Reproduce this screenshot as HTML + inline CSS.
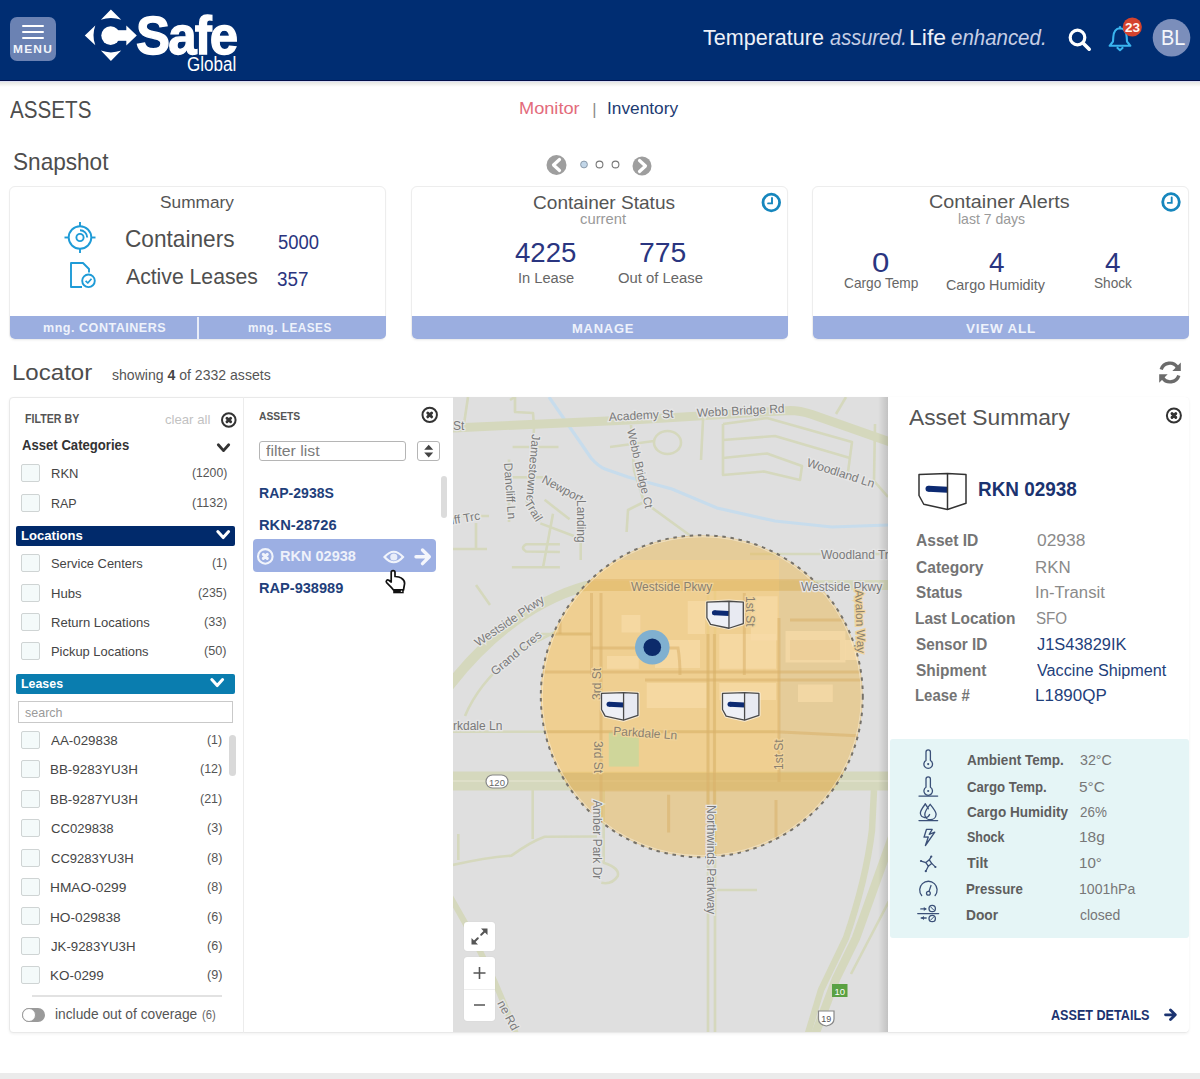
<!DOCTYPE html>
<html><head><meta charset="utf-8"><title>Assets</title>
<style>
html,body{margin:0;padding:0;}
body{width:1200px;height:1079px;overflow:hidden;position:relative;background:#ffffff;font-family:"Liberation Sans", sans-serif;}
.t{position:absolute;white-space:nowrap;line-height:1;}
.b{position:absolute;}
svg.b{overflow:visible;}
</style></head><body>
<div class="b" style="left:0px;top:0px;width:1200px;height:80px;background:#002d72;"></div>
<div class="b" style="left:0px;top:79.5px;width:1200px;height:1.2px;background:#020f4a;"></div>
<div class="b" style="left:0px;top:80.7px;width:1200px;height:1.3px;background:#dcdff4;"></div>
<div class="b" style="left:0px;top:82px;width:1200px;height:5px;background:linear-gradient(#e6e7e2,#ffffff);"></div>
<div class="b" style="left:9.5px;top:17px;width:46px;height:44px;background:#6b82b3;border-radius:7px;"></div>
<div class="b" style="left:22px;top:24.5px;width:22px;height:2.6px;background:#ffffff;border-radius:1px;"></div>
<div class="b" style="left:22px;top:30.5px;width:22px;height:2.6px;background:#ffffff;border-radius:1px;"></div>
<div class="b" style="left:22px;top:36.5px;width:22px;height:2.6px;background:#ffffff;border-radius:1px;"></div>
<div class="t" style="left:12.90px;top:44.40px;font-size:11.8px;font-weight:700;color:#f2f5fb;letter-spacing:1.2px;transform:scale(1.0105,1);transform-origin:0 9.90px;">MENU</div>
<svg class="b" style="left:80px;top:5px;" width="65" height="62" viewBox="80 5 65 62">
<path d="M111,18.5 A17.2,17.2 0 1 0 111,52.7 L111,47 A11.5,11.5 0 1 1 111,24.2 Z" fill="#001f62" opacity="0.15"/>
<g fill="#ffffff">
<path d="M110.9,9.4 L121.2,19.7 Q110.9,16.3 100.9,19.7 Z"/>
<path d="M110.9,61.1 L121.2,50.6 Q110.9,54.2 100.9,50.6 Z"/>
<path d="M84.8,35.6 L95.3,25.6 Q91.6,35.6 95.3,45.3 Z"/>
<circle cx="110.6" cy="35.6" r="9.3"/>
<rect x="110" y="30.2" width="18" height="10.6"/>
<path d="M126.3,25.6 L136.8,35.6 L126.3,45.4 Z"/>
</g></svg>
<div class="t" style="left:135.65px;top:8.30px;font-size:54px;font-weight:700;color:#ffffff;letter-spacing:-2px;transform:scale(0.9457,1);transform-origin:0 46.00px;-webkit-text-stroke:1.3px #fff;">Safe</div>
<div class="t" style="left:186.72px;top:54.60px;font-size:19.4px;color:#ffffff;transform:scale(0.8778,1);transform-origin:0 16.70px;">Global</div>
<div class="t" style="left:702.50px;top:26.80px;font-size:22px;color:#eef1f8;transform:scale(0.9797,1);transform-origin:0 18.50px;">Temperature</div>
<div class="t" style="left:829.60px;top:26.80px;font-size:22px;color:#c6cee5;font-style:italic;transform:scale(0.9110,1);transform-origin:0 18.50px;">assured.</div>
<div class="t" style="left:909.06px;top:26.80px;font-size:22px;color:#eef1f8;transform:scale(1.0441,1);transform-origin:0 18.50px;">Life</div>
<div class="t" style="left:951.30px;top:26.80px;font-size:22px;color:#c6cee5;font-style:italic;transform:scale(0.9300,1);transform-origin:0 18.50px;">enhanced.</div>
<svg class="b" style="left:1060px;top:20px;" width="40" height="40" viewBox="1060 20 40 40"><circle cx="1077.5" cy="37.5" r="7.3" fill="none" stroke="#fff" stroke-width="3.2"/><line x1="1083.2" y1="43.2" x2="1089.2" y2="49.2" stroke="#fff" stroke-width="3.6" stroke-linecap="round"/></svg>
<svg class="b" style="left:1100px;top:15px;" width="45" height="40" viewBox="1100 15 45 40"><path d="M1120,28.2 C1115,28.5 1113.6,32 1113.3,37 L1113,41.5 L1109.6,45.8 L1130.4,45.8 L1127,41.5 L1126.7,37 C1126.4,32 1125,28.5 1120,28.2 Z" fill="none" stroke="#3ab5ef" stroke-width="2.1" stroke-linejoin="round"/><path d="M1120,26.2 L1120,28.4" stroke="#3ab5ef" stroke-width="2.2"/><path d="M1116.8,47.2 L1120,50.2 L1123.2,47.2" fill="none" stroke="#3ab5ef" stroke-width="2" stroke-linejoin="round"/></svg>
<svg class="b" style="left:1120px;top:15px;" width="25" height="25" viewBox="1120 15 25 25"><circle cx="1132.3" cy="27" r="9.6" fill="#d4432d"/></svg>
<div class="t" style="left:1124.60px;top:21.30px;font-size:13px;font-weight:700;color:#fff6f2;transform:scale(1.0429,1);transform-origin:0 11.00px;">23</div>
<svg class="b" style="left:1150px;top:17px;" width="44" height="42" viewBox="1150 17 44 42"><circle cx="1171.5" cy="37.8" r="18.8" fill="#7b8ebb"/></svg>
<div class="t" style="left:1160.80px;top:26.70px;font-size:22.2px;color:#f4f6fb;transform:scale(0.8962,1);transform-origin:0 18.60px;">BL</div>
<div class="t" style="left:9.70px;top:97.80px;font-size:24px;color:#4d4d4d;transform:scale(0.8596,1);transform-origin:0 20.50px;">ASSETS</div>
<div class="t" style="left:519.08px;top:100.20px;font-size:16.2px;color:#e36b7b;transform:scale(1.1226,1);transform-origin:0 14.10px;">Monitor</div>
<div class="t" style="left:592.30px;top:101.05px;font-size:16.5px;color:#8a8a8a;">|</div>
<div class="t" style="left:607.13px;top:100.20px;font-size:16.2px;color:#1d3b72;transform:scale(1.0682,1);transform-origin:0 14.10px;">Inventory</div>
<div class="t" style="left:13.03px;top:150.70px;font-size:23.2px;color:#4d4d4d;transform:scale(0.9742,1);transform-origin:0 19.60px;">Snapshot</div>
<svg class="b" style="left:540px;top:150px;" width="120" height="30" viewBox="540 150 120 30">
<circle cx="556.5" cy="165" r="10" fill="#9e9e9e"/>
<path d="M559.5,159.5 L553.5,165 L559.5,170.5" fill="none" stroke="#fff" stroke-width="3.2" stroke-linecap="round" stroke-linejoin="round"/>
<circle cx="642" cy="166" r="9.5" fill="#9e9e9e"/>
<path d="M639.5,160.5 L645.5,166 L639.5,171.5" fill="none" stroke="#fff" stroke-width="3.2" stroke-linecap="round" stroke-linejoin="round"/>
<circle cx="584" cy="164.5" r="3.4" fill="#c2d6e8" stroke="#8a9aaa" stroke-width="1"/>
<circle cx="599.5" cy="164.5" r="3.4" fill="#fff" stroke="#777" stroke-width="1.1"/>
<circle cx="615.5" cy="164.5" r="3.4" fill="#fff" stroke="#777" stroke-width="1.1"/>
</svg>
<div class="b" style="left:9px;top:186px;width:377px;height:154px;background:#ffffff;border:1px solid #ededed;border-radius:6px;box-sizing:border-box;box-shadow:0 1px 2px rgba(0,0,0,0.04);"></div>
<div class="b" style="left:9.5px;top:316.2px;width:376px;height:23.3px;background:#9baee0;border-radius:0 0 5px 5px;"></div>
<div class="b" style="left:411px;top:186px;width:377px;height:154px;background:#ffffff;border:1px solid #ededed;border-radius:6px;box-sizing:border-box;box-shadow:0 1px 2px rgba(0,0,0,0.04);"></div>
<div class="b" style="left:411.5px;top:316.2px;width:376px;height:23.3px;background:#9baee0;border-radius:0 0 5px 5px;"></div>
<div class="b" style="left:812px;top:186px;width:377px;height:154px;background:#ffffff;border:1px solid #ededed;border-radius:6px;box-sizing:border-box;box-shadow:0 1px 2px rgba(0,0,0,0.04);"></div>
<div class="b" style="left:812.5px;top:316.2px;width:376px;height:23.3px;background:#9baee0;border-radius:0 0 5px 5px;"></div>
<div class="t" style="left:159.81px;top:193.60px;font-size:17.4px;color:#555;transform:scale(0.9932,1);transform-origin:0 14.70px;">Summary</div>
<svg class="b" style="left:60px;top:218px;" width="40" height="40" viewBox="60 218 40 40">
<g fill="none" stroke="#1e9bd7" stroke-width="1.9">
<circle cx="80" cy="237.5" r="11.3"/>
<circle cx="80" cy="237.5" r="3.6"/>
<path d="M80,230.3 A7.2,7.2 0 0 1 87.2,237.5"/>
<path d="M80,232.8 A4.7,4.7 0 0 1 84.7,237.5" stroke-width="0"/>
<line x1="80" y1="222" x2="80" y2="226.2"/><line x1="80" y1="248.8" x2="80" y2="253"/>
<line x1="64.5" y1="237.5" x2="68.7" y2="237.5"/><line x1="91.3" y1="237.5" x2="95.5" y2="237.5"/>
</g></svg>
<svg class="b" style="left:62px;top:258px;" width="38" height="34" viewBox="62 258 38 34">
<g fill="none" stroke="#1e9bd7" stroke-width="1.9" stroke-linejoin="round">
<path d="M82,287 L71,287 L71,263 L83,263 L89,269 L89,272.5"/>
<circle cx="88.5" cy="280.8" r="6.3"/>
<path d="M85.6,280.8 L87.8,283 L91.5,278.8" stroke-width="1.7"/>
</g></svg>
<div class="t" style="left:124.84px;top:227.50px;font-size:23.6px;color:#4f4f4f;transform:scale(0.9602,1);transform-origin:0 19.80px;">Containers</div>
<div class="t" style="left:277.72px;top:232.35px;font-size:20.9px;color:#2a3580;transform:scale(0.8822,1);transform-origin:0 17.95px;">5000</div>
<div class="t" style="left:125.80px;top:265.80px;font-size:22px;color:#4f4f4f;transform:scale(0.9628,1);transform-origin:0 18.50px;">Active Leases</div>
<div class="t" style="left:276.52px;top:270.15px;font-size:19.3px;color:#2a3580;transform:scale(0.9774,1);transform-origin:0 16.15px;">357</div>
<div class="t" style="left:42.73px;top:322.15px;font-size:12.3px;font-weight:700;color:#eef2fb;letter-spacing:0.5px;transform:scale(1.0210,1);transform-origin:0 10.15px;">mng. CONTAINERS</div>
<div class="t" style="left:247.54px;top:322.15px;font-size:12.3px;font-weight:700;color:#eef2fb;letter-spacing:0.5px;transform:scale(0.9570,1);transform-origin:0 10.15px;">mng. LEASES</div>
<div class="b" style="left:196.5px;top:316.5px;width:2px;height:23px;background:#e9edf8;"></div>
<div class="t" style="left:532.70px;top:194.25px;font-size:18.1px;color:#555;transform:scale(1.0541,1);transform-origin:0 15.05px;">Container Status</div>
<div class="t" style="left:580.00px;top:211.90px;font-size:14.8px;color:#999;">current</div>
<svg class="b" style="left:755px;top:188px;" width="32" height="30" viewBox="755 188 32 30"><g fill="none" stroke="#1686bd" stroke-linecap="round"><circle cx="771.3" cy="202.5" r="8.3" stroke-width="2.8"/><path d="M772.0,197.9 L772.0,203.4 L768.0999999999999,203.4" stroke-width="1.9"/></g></svg>
<div class="t" style="left:514.50px;top:238.15px;font-size:28.3px;color:#2a3580;transform:scale(0.9758,1);transform-origin:0 24.15px;">4225</div>
<div class="t" style="left:639.00px;top:238.15px;font-size:28.3px;color:#2a3580;">775</div>
<div class="t" style="left:517.79px;top:270.20px;font-size:15.2px;color:#666;transform:scale(0.9649,1);transform-origin:0 13.10px;">In Lease</div>
<div class="t" style="left:617.50px;top:270.20px;font-size:15.2px;color:#666;transform:scale(0.9770,1);transform-origin:0 13.10px;">Out of Lease</div>
<div class="t" style="left:572.35px;top:322.00px;font-size:13.6px;font-weight:700;color:#eef2fb;letter-spacing:0.8px;transform:scale(0.9524,1);transform-origin:0 11.30px;">MANAGE</div>
<div class="t" style="left:929.42px;top:192.65px;font-size:18.3px;color:#555;transform:scale(1.0814,1);transform-origin:0 15.65px;">Container Alerts</div>
<div class="t" style="left:958.05px;top:211.90px;font-size:14.8px;color:#999;transform:scale(0.9478,1);transform-origin:0 12.40px;">last 7 days</div>
<svg class="b" style="left:1155px;top:188px;" width="32" height="30" viewBox="1155 188 32 30"><g fill="none" stroke="#1686bd" stroke-linecap="round"><circle cx="1171" cy="202" r="8.3" stroke-width="2.8"/><path d="M1171.7,197.4 L1171.7,202.9 L1167.8,202.9" stroke-width="1.9"/></g></svg>
<div class="t" style="left:872.35px;top:249.80px;font-size:27px;color:#2a3580;transform:scale(1.1538,1);transform-origin:0 22.50px;">0</div>
<div class="t" style="left:988.75px;top:249.80px;font-size:27px;color:#2a3580;transform:scale(1.0333,1);transform-origin:0 22.50px;">4</div>
<div class="t" style="left:1104.85px;top:249.80px;font-size:27px;color:#2a3580;transform:scale(1.0333,1);transform-origin:0 22.50px;">4</div>
<div class="t" style="left:844.40px;top:275.90px;font-size:14.8px;color:#666;transform:scale(0.9262,1);transform-origin:0 12.40px;">Cargo Temp</div>
<div class="t" style="left:945.50px;top:277.90px;font-size:14.8px;color:#666;transform:scale(0.9706,1);transform-origin:0 12.40px;">Cargo Humidity</div>
<div class="t" style="left:1093.68px;top:275.90px;font-size:14.8px;color:#666;transform:scale(0.9225,1);transform-origin:0 12.40px;">Shock</div>
<div class="t" style="left:965.70px;top:322.00px;font-size:13.6px;font-weight:700;color:#eef2fb;letter-spacing:0.8px;transform:scale(0.9900,1);transform-origin:0 11.30px;">VIEW ALL</div>
<div class="t" style="left:11.86px;top:361.55px;font-size:22.5px;color:#4d4d4d;transform:scale(1.0685,1);transform-origin:0 18.75px;">Locator</div>
<div class="t" style="left:112.00px;top:368.05px;font-size:14.5px;color:#555;transform:scale(0.9695,1);transform-origin:0 12.25px;">showing <b style="color:#444">4</b> of 2332 assets</div>
<svg class="b" style="left:1150px;top:355px;" width="40" height="35" viewBox="1150 355 40 35"><g fill="none" stroke="#6b6b6b" stroke-width="3.4">
<path d="M1161.2,369.5 A9,9 0 0 1 1177.5,367.5"/>
<path d="M1178.8,375.5 A9,9 0 0 1 1162.5,377.5"/></g>
<path d="M1180.8,362.5 L1180.8,371 L1172.3,371 Z" fill="#6b6b6b"/>
<path d="M1159.2,382.8 L1159.2,374.3 L1167.7,374.3 Z" fill="#6b6b6b"/></svg>
<div class="b" style="left:9px;top:397px;width:1180px;height:636px;background:#ffffff;border:1px solid #e9e9e9;border-radius:4px;box-sizing:border-box;box-shadow:0 1px 3px rgba(0,0,0,0.06);"></div>
<div class="b" style="left:243px;top:397px;width:1px;height:636px;background:#ececec;"></div>
<div class="t" style="left:25.00px;top:413.30px;font-size:12px;font-weight:700;color:#555;transform:scale(0.8885,1);transform-origin:0 10.00px;">FILTER BY</div>
<div class="t" style="left:164.60px;top:413.05px;font-size:13.5px;color:#c2c2c2;transform:scale(0.9739,1);transform-origin:0 11.25px;">clear all</div>
<svg class="b" style="left:215px;top:408px;" width="28" height="25" viewBox="215 408 28 25"><circle cx="228.8" cy="420" r="6.8" fill="none" stroke="#333" stroke-width="2"/><path d="M226.964,418.164 L230.63600000000002,421.836 M230.63600000000002,418.164 L226.964,421.836" stroke="#333" stroke-width="2.9" stroke-linecap="round"/></svg>
<div class="t" style="left:21.90px;top:438.20px;font-size:14.2px;font-weight:700;color:#333;transform:scale(0.9250,1);transform-origin:0 12.10px;">Asset Categories</div>
<svg class="b" style="left:210px;top:438px;" width="25" height="20" viewBox="210 438 25 20"><path d="M218.3,444.8 L223.5,450.6 L228.7,444.8" fill="none" stroke="#333" stroke-width="2.8" stroke-linecap="round" stroke-linejoin="round"/></svg>
<div class="b" style="left:20.8px;top:464.2px;width:19px;height:18px;background:#f4fafa;border:1px solid #cfd4d4;border-radius:2px;box-sizing:border-box;"></div>
<div class="t" style="left:51.00px;top:467.30px;font-size:13px;color:#454545;">RKN</div>
<div class="t" style="left:191.75px;top:467.40px;font-size:12.8px;color:#555;transform:scale(0.9528,1);transform-origin:0 10.90px;">(1200)</div>
<div class="b" style="left:20.8px;top:494.0px;width:19px;height:18px;background:#f4fafa;border:1px solid #cfd4d4;border-radius:2px;box-sizing:border-box;"></div>
<div class="t" style="left:51.04px;top:497.30px;font-size:13px;color:#454545;transform:scale(0.9600,1);transform-origin:0 11.00px;">RAP</div>
<div class="t" style="left:191.72px;top:497.40px;font-size:12.8px;color:#555;transform:scale(0.9800,1);transform-origin:0 10.90px;">(1132)</div>
<div class="b" style="left:15.6px;top:525.8px;width:219.4px;height:20px;background:#012a6b;border-radius:2px;"></div>
<div class="t" style="left:20.92px;top:529.15px;font-size:13.3px;font-weight:700;color:#ffffff;transform:scale(0.9839,1);transform-origin:0 11.15px;">Locations</div>
<svg class="b" style="left:210px;top:525px;" width="25" height="20" viewBox="210 525 25 20"><path d="M217.8,531.5 L223.2,537.6 L228.6,531.5" fill="none" stroke="#ffffff" stroke-width="3" stroke-linecap="round" stroke-linejoin="round"/></svg>
<div class="b" style="left:20.8px;top:554.2px;width:19px;height:18px;background:#f4fafa;border:1px solid #cfd4d4;border-radius:2px;box-sizing:border-box;"></div>
<div class="t" style="left:51.01px;top:557.30px;font-size:13px;color:#454545;transform:scale(0.9923,1);transform-origin:0 11.00px;">Service Centers</div>
<div class="t" style="left:211.54px;top:557.40px;font-size:12.8px;color:#555;transform:scale(0.9643,1);transform-origin:0 10.90px;">(1)</div>
<div class="b" style="left:20.8px;top:583.5px;width:19px;height:18px;background:#f4fafa;border:1px solid #cfd4d4;border-radius:2px;box-sizing:border-box;"></div>
<div class="t" style="left:50.99px;top:587.30px;font-size:13px;color:#454545;transform:scale(1.0086,1);transform-origin:0 11.00px;">Hubs</div>
<div class="t" style="left:198.04px;top:587.40px;font-size:12.8px;color:#555;transform:scale(0.9643,1);transform-origin:0 10.90px;">(235)</div>
<div class="b" style="left:20.8px;top:612.8000000000001px;width:19px;height:18px;background:#f4fafa;border:1px solid #cfd4d4;border-radius:2px;box-sizing:border-box;"></div>
<div class="t" style="left:51.00px;top:616.30px;font-size:13px;color:#454545;transform:scale(1.0041,1);transform-origin:0 11.00px;">Return Locations</div>
<div class="t" style="left:204.21px;top:616.40px;font-size:12.8px;color:#555;transform:scale(0.9905,1);transform-origin:0 10.90px;">(33)</div>
<div class="b" style="left:20.8px;top:642.1px;width:19px;height:18px;background:#f4fafa;border:1px solid #cfd4d4;border-radius:2px;box-sizing:border-box;"></div>
<div class="t" style="left:51.01px;top:645.30px;font-size:13px;color:#454545;transform:scale(0.9928,1);transform-origin:0 11.00px;">Pickup Locations</div>
<div class="t" style="left:204.21px;top:645.40px;font-size:12.8px;color:#555;transform:scale(0.9905,1);transform-origin:0 10.90px;">(50)</div>
<div class="b" style="left:15.6px;top:674px;width:219.4px;height:19.8px;background:#0a7daf;border-radius:2px;"></div>
<div class="t" style="left:20.97px;top:677.15px;font-size:13.3px;font-weight:700;color:#ffffff;transform:scale(0.9318,1);transform-origin:0 11.15px;">Leases</div>
<svg class="b" style="left:205px;top:672px;" width="25" height="20" viewBox="205 672 25 20"><path d="M211.8,679.5 L217.2,685.6 L222.6,679.5" fill="none" stroke="#ffffff" stroke-width="3" stroke-linecap="round" stroke-linejoin="round"/></svg>
<div class="b" style="left:18.1px;top:700.8px;width:214.6px;height:22.5px;background:#ffffff;border:1px solid #c9c9c9;box-sizing:border-box;"></div>
<div class="t" style="left:25.00px;top:706.05px;font-size:13.5px;color:#9a9a9a;transform:scale(0.9250,1);transform-origin:0 11.25px;">search</div>
<div class="b" style="left:20.8px;top:731.0px;width:19px;height:18px;background:#f4fafa;border:1px solid #cfd4d4;border-radius:2px;box-sizing:border-box;"></div>
<div class="t" style="left:51.00px;top:734.30px;font-size:13px;color:#454545;transform:scale(1.0262,1);transform-origin:0 11.00px;">AA-029838</div>
<div class="t" style="left:207.04px;top:734.40px;font-size:12.8px;color:#555;transform:scale(0.9643,1);transform-origin:0 10.90px;">(1)</div>
<div class="b" style="left:20.8px;top:760.4px;width:19px;height:18px;background:#f4fafa;border:1px solid #cfd4d4;border-radius:2px;box-sizing:border-box;"></div>
<div class="t" style="left:49.97px;top:763.30px;font-size:13px;color:#454545;transform:scale(1.0298,1);transform-origin:0 11.00px;">BB-9283YU3H</div>
<div class="t" style="left:200.02px;top:763.40px;font-size:12.8px;color:#555;transform:scale(0.9762,1);transform-origin:0 10.90px;">(12)</div>
<div class="b" style="left:20.8px;top:789.8px;width:19px;height:18px;background:#f4fafa;border:1px solid #cfd4d4;border-radius:2px;box-sizing:border-box;"></div>
<div class="t" style="left:49.97px;top:793.30px;font-size:13px;color:#454545;transform:scale(1.0298,1);transform-origin:0 11.00px;">BB-9287YU3H</div>
<div class="t" style="left:200.02px;top:793.40px;font-size:12.8px;color:#555;transform:scale(0.9762,1);transform-origin:0 10.90px;">(21)</div>
<div class="b" style="left:20.8px;top:819.2px;width:19px;height:18px;background:#f4fafa;border:1px solid #cfd4d4;border-radius:2px;box-sizing:border-box;"></div>
<div class="t" style="left:51.00px;top:822.30px;font-size:13px;color:#454545;transform:scale(1.0081,1);transform-origin:0 11.00px;">CC029838</div>
<div class="t" style="left:206.71px;top:822.40px;font-size:12.8px;color:#555;transform:scale(0.9857,1);transform-origin:0 10.90px;">(3)</div>
<div class="b" style="left:20.8px;top:848.6px;width:19px;height:18px;background:#f4fafa;border:1px solid #cfd4d4;border-radius:2px;box-sizing:border-box;"></div>
<div class="t" style="left:51.00px;top:852.30px;font-size:13px;color:#454545;transform:scale(1.0037,1);transform-origin:0 11.00px;">CC9283YU3H</div>
<div class="t" style="left:206.71px;top:852.40px;font-size:12.8px;color:#555;transform:scale(0.9857,1);transform-origin:0 10.90px;">(8)</div>
<div class="b" style="left:20.8px;top:878.0px;width:19px;height:18px;background:#f4fafa;border:1px solid #cfd4d4;border-radius:2px;box-sizing:border-box;"></div>
<div class="t" style="left:49.94px;top:881.30px;font-size:13px;color:#454545;transform:scale(1.0563,1);transform-origin:0 11.00px;">HMAO-0299</div>
<div class="t" style="left:206.71px;top:881.40px;font-size:12.8px;color:#555;transform:scale(0.9857,1);transform-origin:0 10.90px;">(8)</div>
<div class="b" style="left:20.8px;top:907.4px;width:19px;height:18px;background:#f4fafa;border:1px solid #cfd4d4;border-radius:2px;box-sizing:border-box;"></div>
<div class="t" style="left:49.95px;top:911.30px;font-size:13px;color:#454545;transform:scale(1.0515,1);transform-origin:0 11.00px;">HO-029838</div>
<div class="t" style="left:206.71px;top:911.40px;font-size:12.8px;color:#555;transform:scale(0.9857,1);transform-origin:0 10.90px;">(6)</div>
<div class="b" style="left:20.8px;top:936.8px;width:19px;height:18px;background:#f4fafa;border:1px solid #cfd4d4;border-radius:2px;box-sizing:border-box;"></div>
<div class="t" style="left:51.00px;top:940.30px;font-size:13px;color:#454545;transform:scale(1.0171,1);transform-origin:0 11.00px;">JK-9283YU3H</div>
<div class="t" style="left:206.71px;top:940.40px;font-size:12.8px;color:#555;transform:scale(0.9857,1);transform-origin:0 10.90px;">(6)</div>
<div class="b" style="left:20.8px;top:966.2px;width:19px;height:18px;background:#f4fafa;border:1px solid #cfd4d4;border-radius:2px;box-sizing:border-box;"></div>
<div class="t" style="left:49.97px;top:969.30px;font-size:13px;color:#454545;transform:scale(1.0343,1);transform-origin:0 11.00px;">KO-0299</div>
<div class="t" style="left:206.71px;top:969.40px;font-size:12.8px;color:#555;transform:scale(0.9857,1);transform-origin:0 10.90px;">(9)</div>
<div class="b" style="left:229.2px;top:734.8px;width:7.3px;height:41.7px;background:#d9d9d9;border-radius:4px;"></div>
<div class="b" style="left:32.3px;top:994.5px;width:189.6px;height:2px;background:#e2e2e2;"></div>
<div class="b" style="left:21.9px;top:1007.5px;width:23.5px;height:14.5px;background:#9a9a9a;border-radius:8px;"></div>
<div class="b" style="left:21.9px;top:1007.5px;width:14.5px;height:14.5px;background:#ffffff;border-radius:50%;border:1.3px solid #9a9a9a;box-sizing:border-box;"></div>
<div class="t" style="left:55.03px;top:1007.20px;font-size:14.2px;color:#555;transform:scale(0.9697,1);transform-origin:0 12.10px;">include out of coverage</div>
<div class="t" style="left:202.10px;top:1009.05px;font-size:12.5px;color:#666;transform:scale(0.9000,1);transform-origin:0 10.25px;">(6)</div>
<div class="t" style="left:258.90px;top:409.50px;font-size:11.6px;font-weight:700;color:#555;transform:scale(0.8891,1);transform-origin:0 9.80px;">ASSETS</div>
<svg class="b" style="left:415px;top:403px;" width="28" height="25" viewBox="415 403 28 25"><circle cx="429.7" cy="414.9" r="7.2" fill="none" stroke="#333" stroke-width="2"/><path d="M427.756,412.95599999999996 L431.644,416.844 M431.644,412.95599999999996 L427.756,416.844" stroke="#333" stroke-width="2.9" stroke-linecap="round"/></svg>
<div class="b" style="left:258.9px;top:441.2px;width:147.5px;height:20px;background:#ffffff;border:1px solid #b5b5b5;border-radius:3px;box-sizing:border-box;"></div>
<div class="t" style="left:265.90px;top:444.05px;font-size:14.5px;color:#7b7b7b;transform:scale(1.0898,1);transform-origin:0 12.25px;">filter list</div>
<div class="b" style="left:417px;top:441.2px;width:23.3px;height:20px;background:#ffffff;border:1px solid #b5b5b5;border-radius:3px;box-sizing:border-box;"></div>
<svg class="b" style="left:417px;top:441px;" width="24" height="21" viewBox="417 441 24 21"><path d="M424.2,449.8 L428.7,444.8 L433.2,449.8 Z M424.2,452.6 L428.7,457.6 L433.2,452.6 Z" fill="#444"/></svg>
<div class="b" style="left:441.3px;top:476.3px;width:6px;height:41.3px;background:#dcdcdc;border-radius:3px;"></div>
<div class="t" style="left:259.48px;top:486.90px;font-size:13.8px;font-weight:700;color:#1f3f7b;transform:scale(1.0164,1);transform-origin:0 11.40px;">RAP-2938S</div>
<div class="t" style="left:259.43px;top:518.90px;font-size:13.8px;font-weight:700;color:#1f3f7b;transform:scale(1.0653,1);transform-origin:0 11.40px;">RKN-28726</div>
<div class="b" style="left:253px;top:538.5px;width:183px;height:33.5px;background:#9cafe3;border-radius:4px;"></div>
<svg class="b" style="left:255px;top:546px;" width="22" height="22" viewBox="255 546 22 22"><circle cx="265.3" cy="556.4" r="7.3" fill="none" stroke="#f1f4fb" stroke-width="2.1"/><path d="M263.329,554.429 L267.271,558.371 M267.271,554.429 L263.329,558.371" stroke="#f1f4fb" stroke-width="3.045" stroke-linecap="round"/></svg>
<div class="t" style="left:279.85px;top:549.90px;font-size:13.8px;font-weight:700;color:#eef1fa;transform:scale(1.0521,1);transform-origin:0 11.40px;">RKN 02938</div>
<svg class="b" style="left:380px;top:545px;" width="28" height="22" viewBox="380 545 28 22"><path d="M384.5,557 Q393.8,546.5 403,557 Q393.8,567.5 384.5,557 Z" fill="none" stroke="#f1f4fb" stroke-width="2.2"/>
<circle cx="393.8" cy="557" r="3.6" fill="#e9edf9"/></svg>
<svg class="b" style="left:410px;top:545px;" width="24" height="22" viewBox="410 545 24 22"><path d="M416,556.8 L428.5,556.8 M422.5,550 L429.3,556.8 L422.5,563.6" fill="none" stroke="#f4f6fc" stroke-width="3.4" stroke-linecap="round" stroke-linejoin="round"/></svg>
<div class="t" style="left:259.44px;top:581.90px;font-size:13.8px;font-weight:700;color:#1f3f7b;transform:scale(1.0570,1);transform-origin:0 11.40px;">RAP-938989</div>
<svg class="b" style="left:383px;top:568px;" width="25" height="28" viewBox="383 568 25 28"><path d="M391.2,572.5 C391.2,570 395,570 395,572.5 L395,576.5 C397,576.5 400,577 401.5,578.2 C403.5,579.5 404.8,581 404.6,583.5 L403.5,590 L393.5,590 C391.5,587 388.5,584.5 386.6,582.6 C385.5,581 387,579.3 388.8,580.2 L391.2,582 Z" fill="#fff" stroke="#111" stroke-width="1.7" stroke-linejoin="round"/>
<rect x="393.2" y="589" width="10.5" height="4.3" fill="#111"/><circle cx="401.5" cy="591.2" r="0.8" fill="#fff"/></svg>
<svg class="b" style="left:453px;top:397px;font-family:'Liberation Sans',sans-serif;overflow:hidden;" width="435" height="635" viewBox="453 397 435 635"><rect x="453" y="397" width="435" height="635" fill="#dfdfdf"/><path d="M549,397 L591,458 Q598,466 605,469 L628,477 L672,489 L717,508 L775,521 L832,527 L888,525" fill="none" stroke="#c7dcec" stroke-width="3.2"/><path d="M468,397 L464,424" fill="none" stroke="#d5d8bd" stroke-width="2.6" stroke-linejoin="round"/><path d="M515,397 L515,412 L533,413 L534,426" fill="none" stroke="#d5d8bd" stroke-width="2.6" stroke-linejoin="round"/><path d="M534,428 L533,447" fill="none" stroke="#d5d8bd" stroke-width="2.6" stroke-linejoin="round"/><path d="M526,500 L540,521" fill="none" stroke="#d5d8bd" stroke-width="2.6" stroke-linejoin="round"/><path d="M512.6,447 L558.5,447" fill="none" stroke="#d5d8bd" stroke-width="2.6" stroke-linejoin="round"/><path d="M509,459.5 L509,522" fill="none" stroke="#d5d8bd" stroke-width="2.6" stroke-linejoin="round"/><path d="M512.6,477.3 L543.2,477.3" fill="none" stroke="#d5d8bd" stroke-width="2.6" stroke-linejoin="round"/><path d="M580.7,540 L580.7,560" fill="none" stroke="#d5d8bd" stroke-width="2.6" stroke-linejoin="round"/><path d="M453,516 L489,516" fill="none" stroke="#d5d8bd" stroke-width="2.6" stroke-linejoin="round"/><path d="M476,523 L476,549 M453,549 L487,549" fill="none" stroke="#d5d8bd" stroke-width="2.6" stroke-linejoin="round"/><path d="M553,513.7 L543.2,566.6" fill="none" stroke="#d5d8bd" stroke-width="2.6" stroke-linejoin="round"/><path d="M559.9,544.3 L526,544.3 Q520,547.8 526,551.5 L559.9,552" fill="none" stroke="#d5d8bd" stroke-width="2.6" stroke-linejoin="round"/><path d="M511.9,567.3 L559.9,567.3" fill="none" stroke="#d5d8bd" stroke-width="2.6" stroke-linejoin="round"/><path d="M631,425 L634,470 L644,502 L689.4,535" fill="none" stroke="#d5d8bd" stroke-width="2.6" stroke-linejoin="round"/><path d="M644,502 L628,510 L626.6,532" fill="none" stroke="#d5d8bd" stroke-width="2.6" stroke-linejoin="round"/><path d="M610,447 L654,441" fill="none" stroke="#d5d8bd" stroke-width="2.6" stroke-linejoin="round"/><path d="M654,442.5 A13.5,11.5 0 1 0 681,442.5 A13.5,11.5 0 1 0 654,442.5" fill="none" stroke="#d5d8bd" stroke-width="2.6" stroke-linejoin="round"/><path d="M703,420 L701,460" fill="none" stroke="#d5d8bd" stroke-width="2.6" stroke-linejoin="round"/><path d="M723,424 L767,418 L852,442 L848,472" fill="none" stroke="#d5d8bd" stroke-width="2.6" stroke-linejoin="round"/><path d="M723,440 L775,436 L850,458" fill="none" stroke="#d5d8bd" stroke-width="2.6" stroke-linejoin="round"/><path d="M723,424 L723,475 L764,471.5 L800,480 L802,466 L767,453.5 L723,458" fill="none" stroke="#d5d8bd" stroke-width="2.6" stroke-linejoin="round"/><path d="M846,397 L836,414" fill="none" stroke="#d5d8bd" stroke-width="2.6" stroke-linejoin="round"/><path d="M875,424 L874,481 L888,497" fill="none" stroke="#d5d8bd" stroke-width="2.6" stroke-linejoin="round"/><path d="M750,554 L888,554" fill="none" stroke="#d5d8bd" stroke-width="2.6" stroke-linejoin="round"/><path d="M453,731.8 L775,731.8" fill="none" stroke="#d5d8bd" stroke-width="2.6" stroke-linejoin="round"/><path d="M541,634 L592,634" fill="none" stroke="#d5d8bd" stroke-width="2.6" stroke-linejoin="round"/><path d="M465,716 Q480,680 520,650 L557,631" fill="none" stroke="#d5d8bd" stroke-width="2.6" stroke-linejoin="round"/><path d="M476,585 L490,605" fill="none" stroke="#d5d8bd" stroke-width="2.6" stroke-linejoin="round"/><path d="M510,400 L515,397" fill="none" stroke="#d5d8bd" stroke-width="2.6" stroke-linejoin="round"/><path d="M544.6,499.8 L569.6,519.3" fill="none" stroke="#d5d8bd" stroke-width="2.6" stroke-linejoin="round"/><path d="M540.4,523.4 L573.8,536" fill="none" stroke="#d5d8bd" stroke-width="2.6" stroke-linejoin="round"/><path d="M532.7,784.7 L532.7,839" fill="none" stroke="#d5d8bd" stroke-width="2.6" stroke-linejoin="round"/><path d="M440,868 Q480,858 511.5,855.6 Q530,842 544.6,836.7 L597,836.5" fill="none" stroke="#d5d8bd" stroke-width="2.6" stroke-linejoin="round"/><path d="M458.3,834 L458.3,860" fill="none" stroke="#d5d8bd" stroke-width="2.6" stroke-linejoin="round"/><path d="M603.7,790 L603.7,862.7 Q620,868 617.8,876 Q612,885 601.3,882.8" fill="none" stroke="#d5d8bd" stroke-width="2.6" stroke-linejoin="round"/><path d="M708,585 L708,1032" fill="none" stroke="#d5d8bd" stroke-width="2.6" stroke-linejoin="round"/><path d="M715,585 L715,1032" fill="none" stroke="#d5d8bd" stroke-width="2.6" stroke-linejoin="round"/><path d="M717,890 L757,890" fill="none" stroke="#d5d8bd" stroke-width="2.6" stroke-linejoin="round"/><path d="M900,880 L851,974" fill="none" stroke="#d5d8bd" stroke-width="2.6" stroke-linejoin="round"/><path d="M440,428.6 L640,419.5 L790,410.5 Q800,410.5 812,414.5 L900,445.5" fill="none" stroke="#d5d8bd" stroke-width="8.8"/><path d="M430,712 Q500,610 586,586 L900,585" fill="none" stroke="#d5d8bd" stroke-width="10"/><path d="M453,781 L888,781" fill="none" stroke="#d5d8bd" stroke-width="19"/><path d="M453,781 L888,781" fill="none" stroke="#e0e2cc" stroke-width="1.5"/><path d="M874,790 L872,830 Q866,880 846,938 L821,990 L806,1040" fill="none" stroke="#d5d8bd" stroke-width="6.5"/><path d="M900,815 L856,938 L836,979 L813,1040" fill="none" stroke="#d5d8bd" stroke-width="8.5"/><path d="M440,880 Q490,960 520,1045" fill="none" stroke="#d5d8bd" stroke-width="6"/><defs><clipPath id="cc"><circle cx="701.8" cy="696.2" r="161"/></clipPath></defs><circle cx="701.8" cy="696.2" r="161" fill="#eabb5e" fill-opacity="0.55"/><g clip-path="url(#cc)"><rect x="530" y="560" width="249" height="213" fill="#fdd386" fill-opacity="0.42"/><rect x="621.5" y="615" width="18.899999999999977" height="17.5" fill="#f8dca8" fill-opacity="0.7"/><rect x="687.7" y="601" width="17.299999999999955" height="33" fill="#f8dca8" fill-opacity="0.7"/><rect x="750.8" y="596.2" width="26.800000000000068" height="44.19999999999993" fill="#f8dca8" fill-opacity="0.7"/><rect x="785.5" y="631" width="60.0" height="31.5" fill="#f8dca8" fill-opacity="0.7"/><rect x="719.3" y="634" width="56.700000000000045" height="34.799999999999955" fill="#f8dca8" fill-opacity="0.7"/><rect x="646.7" y="683" width="59.89999999999998" height="25" fill="#f8dca8" fill-opacity="0.7"/><rect x="719.3" y="683" width="56.700000000000045" height="17" fill="#f8dca8" fill-opacity="0.7"/><rect x="798" y="684.5" width="34.799999999999955" height="17.5" fill="#f8dca8" fill-opacity="0.7"/><rect x="607" y="656" width="31.799999999999955" height="12.799999999999955" fill="#f8dca8" fill-opacity="0.7"/><rect x="655" y="640" width="45" height="28" fill="#f8dca8" fill-opacity="0.7"/><rect x="845" y="640" width="17" height="20" fill="#f8dca8" fill-opacity="0.7"/><rect x="790" y="640" width="50" height="20" fill="#e8c88e" fill-opacity="0.5"/><rect x="608.8" y="731.8" width="30" height="34.8" fill="#cfd69a"/><path d="M453,585 L888,585" stroke="#d6a550" stroke-opacity="0.3" stroke-width="12" fill="none"/><path d="M453,782 L888,782" stroke="#d6a550" stroke-opacity="0.3" stroke-width="19" fill="none"/><path d="M591.5,593 L591.5,675" fill="none" stroke="#d9b06a" stroke-width="3" stroke-opacity="0.55"/><path d="M601,593 L601,1032" fill="none" stroke="#d9b06a" stroke-width="3" stroke-opacity="0.55"/><path d="M708,634 L708,1032" fill="none" stroke="#d9b06a" stroke-width="3" stroke-opacity="0.55"/><path d="M714.4,634 L714.4,1032" fill="none" stroke="#d9b06a" stroke-width="3" stroke-opacity="0.55"/><path d="M744.3,593 L744.3,675" fill="none" stroke="#d9b06a" stroke-width="3" stroke-opacity="0.55"/><path d="M779,618 L779,782" fill="none" stroke="#d9b06a" stroke-width="3" stroke-opacity="0.55"/><path d="M591.5,648 L678,648 Q680,660 680,675" fill="none" stroke="#d9b06a" stroke-width="3" stroke-opacity="0.55"/><path d="M541,672 L862,672" fill="none" stroke="#d9b06a" stroke-width="3" stroke-opacity="0.55"/><path d="M645,680 L862,680" fill="none" stroke="#d9b06a" stroke-width="3" stroke-opacity="0.55"/><path d="M453,731.7 L776,731.7 L862,736" fill="none" stroke="#d9b06a" stroke-width="3" stroke-opacity="0.55"/><path d="M541,634 L591.5,634" fill="none" stroke="#d9b06a" stroke-width="3" stroke-opacity="0.55"/><path d="M668.6,794.7 L668.6,832.5" fill="none" stroke="#d9b06a" stroke-width="3" stroke-opacity="0.55"/><path d="M776,800 L776,840" fill="none" stroke="#d9b06a" stroke-width="3" stroke-opacity="0.55"/><path d="M560,595 L560,634" fill="none" stroke="#d9b06a" stroke-width="3" stroke-opacity="0.55"/><path d="M790,620 L862,620" fill="none" stroke="#d9b06a" stroke-width="3" stroke-opacity="0.55"/></g><circle cx="701.8" cy="696.2" r="159.6" fill="none" stroke="#ffffff" stroke-opacity="0.35" stroke-width="1.2"/><circle cx="701.8" cy="696.2" r="161" fill="none" stroke="#76726a" stroke-width="2" stroke-dasharray="3.5 4.7"/><text x="453" y="430" font-size="12" fill="#7a7a7a" text-anchor="start" stroke="#e6e6e6" stroke-width="2.5" paint-order="stroke">St</text><text x="609" y="421" font-size="12" fill="#7a7a7a" text-anchor="start" stroke="#e6e6e6" stroke-width="2.5" paint-order="stroke" transform="rotate(-3 609 421)">Academy St</text><text x="697" y="417" font-size="12" fill="#7a7a7a" text-anchor="start" stroke="#e6e6e6" stroke-width="2.5" paint-order="stroke" transform="rotate(-3 697 417)">Webb Bridge Rd</text><text x="806" y="466" font-size="12" fill="#7a7a7a" text-anchor="start" stroke="#e6e6e6" stroke-width="2.5" paint-order="stroke" transform="rotate(18 806 466)">Woodland Ln</text><text x="532" y="434" font-size="12" fill="#7a7a7a" text-anchor="start" stroke="#e6e6e6" stroke-width="2.5" paint-order="stroke" transform="rotate(95 532 434)">Jamestowne</text><text x="524" y="503" font-size="12" fill="#7a7a7a" text-anchor="start" stroke="#e6e6e6" stroke-width="2.5" paint-order="stroke" transform="rotate(58 524 503)">Trail</text><text x="504" y="463" font-size="12" fill="#7a7a7a" text-anchor="start" stroke="#e6e6e6" stroke-width="2.5" paint-order="stroke" transform="rotate(86 504 463)">Dancliff Ln</text><text x="541" y="482" font-size="12" fill="#7a7a7a" text-anchor="start" stroke="#e6e6e6" stroke-width="2.5" paint-order="stroke" transform="rotate(28 541 482)">Newport</text><text x="577" y="500" font-size="12" fill="#7a7a7a" text-anchor="start" stroke="#e6e6e6" stroke-width="2.5" paint-order="stroke" transform="rotate(90 577 500)">Landing</text><text x="627" y="430" font-size="11.5" fill="#7a7a7a" text-anchor="start" stroke="#e6e6e6" stroke-width="2.5" paint-order="stroke" transform="rotate(77 627 430)">Webb Bridge Ct</text><text x="452" y="524.5" font-size="12" fill="#7a7a7a" text-anchor="start" stroke="#e6e6e6" stroke-width="2.5" paint-order="stroke" transform="rotate(-10 452 524.5)">iff Trc</text><text x="821" y="559" font-size="12" fill="#7a7a7a" text-anchor="start" stroke="#e6e6e6" stroke-width="2.5" paint-order="stroke">Woodland Tr</text><text x="631" y="591" font-size="12" fill="#8a806f" text-anchor="start" stroke="#f0d49c" stroke-width="2.5" paint-order="stroke">Westside Pkwy</text><text x="801" y="591" font-size="12" fill="#7a7a7a" text-anchor="start" stroke="#e6e6e6" stroke-width="2.5" paint-order="stroke">Westside Pkwy</text><text x="855" y="590" font-size="12" fill="#8a806f" text-anchor="start" stroke="#f0d49c" stroke-width="2.5" paint-order="stroke" transform="rotate(88 855 590)">Avalon Way</text><text x="478" y="647" font-size="12" fill="#7a7a7a" text-anchor="start" stroke="#e6e6e6" stroke-width="2.5" paint-order="stroke" transform="rotate(-34 478 647)">Westside Pkwy</text><text x="495" y="676" font-size="12" fill="#7a7a7a" text-anchor="start" stroke="#e6e6e6" stroke-width="2.5" paint-order="stroke" transform="rotate(-40 495 676)">Grand Cres</text><text x="453" y="730" font-size="12" fill="#7a7a7a" text-anchor="start" stroke="#e6e6e6" stroke-width="2.5" paint-order="stroke">rkdale Ln</text><text x="613" y="735" font-size="12" fill="#8a806f" text-anchor="start" stroke="#f0d49c" stroke-width="2.5" paint-order="stroke" transform="rotate(4 613 735)">Parkdale Ln</text><text x="594" y="741" font-size="12" fill="#8a806f" text-anchor="start" stroke="#f0d49c" stroke-width="2.5" paint-order="stroke" transform="rotate(90 594 741)">3rd St</text><text x="601" y="700" font-size="12" fill="#8a806f" text-anchor="start" stroke="#f0d49c" stroke-width="2.5" paint-order="stroke" transform="rotate(-90 601 700)">3rd St</text><text x="783" y="770" font-size="12" fill="#8a806f" text-anchor="start" stroke="#f0d49c" stroke-width="2.5" paint-order="stroke" transform="rotate(-90 783 770)">1st St</text><text x="746" y="596" font-size="12" fill="#8a806f" text-anchor="start" stroke="#f0d49c" stroke-width="2.5" paint-order="stroke" transform="rotate(90 746 596)">1st St</text><text x="593" y="800" font-size="12" fill="#7a7a7a" text-anchor="start" stroke="#e6e6e6" stroke-width="2.5" paint-order="stroke" transform="rotate(90 593 800)">Amber Park Dr</text><text x="707" y="805" font-size="12" fill="#7a7a7a" text-anchor="start" stroke="#e6e6e6" stroke-width="2.5" paint-order="stroke" transform="rotate(90 707 805)">Northwinds Parkway</text><text x="497" y="1003" font-size="12" fill="#7a7a7a" text-anchor="start" stroke="#e6e6e6" stroke-width="2.5" paint-order="stroke" transform="rotate(62 497 1003)">ne Rd</text><rect x="486" y="775" width="22" height="13" rx="6.5" fill="#fff" stroke="#888" stroke-width="1.2"/><text x="497" y="785.5" font-size="9.5" fill="#666" text-anchor="middle">120</text><rect x="832" y="984" width="15.5" height="13" fill="#5aa142"/><text x="839.8" y="994.5" font-size="9.5" fill="#fff" text-anchor="middle">10</text><path d="M818.5,1011 L834,1011 L834,1019 Q834,1024.5 826.3,1026 Q818.5,1024.5 818.5,1019 Z" fill="#fff" stroke="#888" stroke-width="1.2"/><text x="826.3" y="1021.5" font-size="9" fill="#555" text-anchor="middle">19</text><circle cx="652.3" cy="647.3" r="17.3" fill="#80b0d0"/><circle cx="652.3" cy="647.3" r="8.8" fill="#0c2b6b"/><path d="M706.90,602.07 L728.97,601.25 L743.30,602.07 L743.30,623.58 L728.97,628.25 L710.58,624.32 L706.90,617.78 Z" fill="none" stroke="#ffffff" stroke-opacity="0.6" stroke-width="3.3" stroke-linejoin="round"/><path d="M706.90,602.07 L728.97,601.25 L743.30,602.07 L743.30,623.58 L728.97,628.25 L710.58,624.32 L706.90,617.78 Z" fill="#eef0f6"/><path d="M728.97,601.25 L743.30,602.07 L743.30,623.58 L728.97,628.25 Z" fill="#e8eaf2"/><path d="M714.43,612.69 L728.97,613.52" stroke="#0c2a72" stroke-width="5"/><circle cx="714.43" cy="612.69" r="2.5" fill="#0c2a72"/><path d="M706.90,602.07 L728.97,601.25 L743.30,602.07 L743.30,623.58 L728.97,628.25 L710.58,624.32 L706.90,617.78 Z" fill="none" stroke="#4a4a4a" stroke-width="1.3" stroke-linejoin="round"/><line x1="728.97" y1="601.25" x2="728.97" y2="628.25" stroke="#4a4a4a" stroke-width="1.3"/><path d="M601.50,693.44 L623.57,692.60 L637.90,693.44 L637.90,715.34 L623.57,720.10 L605.18,716.10 L601.50,709.44 Z" fill="none" stroke="#ffffff" stroke-opacity="0.6" stroke-width="3.3" stroke-linejoin="round"/><path d="M601.50,693.44 L623.57,692.60 L637.90,693.44 L637.90,715.34 L623.57,720.10 L605.18,716.10 L601.50,709.44 Z" fill="#eef0f6"/><path d="M623.57,692.60 L637.90,693.44 L637.90,715.34 L623.57,720.10 Z" fill="#e8eaf2"/><path d="M609.03,704.26 L623.57,705.09" stroke="#0c2a72" stroke-width="5"/><circle cx="609.03" cy="704.26" r="2.5" fill="#0c2a72"/><path d="M601.50,693.44 L623.57,692.60 L637.90,693.44 L637.90,715.34 L623.57,720.10 L605.18,716.10 L601.50,709.44 Z" fill="none" stroke="#4a4a4a" stroke-width="1.3" stroke-linejoin="round"/><line x1="623.57" y1="692.60" x2="623.57" y2="720.10" stroke="#4a4a4a" stroke-width="1.3"/><path d="M722.50,693.44 L744.57,692.60 L758.90,693.44 L758.90,715.34 L744.57,720.10 L726.18,716.10 L722.50,709.44 Z" fill="none" stroke="#ffffff" stroke-opacity="0.6" stroke-width="3.3" stroke-linejoin="round"/><path d="M722.50,693.44 L744.57,692.60 L758.90,693.44 L758.90,715.34 L744.57,720.10 L726.18,716.10 L722.50,709.44 Z" fill="#eef0f6"/><path d="M744.57,692.60 L758.90,693.44 L758.90,715.34 L744.57,720.10 Z" fill="#e8eaf2"/><path d="M730.03,704.26 L744.57,705.09" stroke="#0c2a72" stroke-width="5"/><circle cx="730.03" cy="704.26" r="2.5" fill="#0c2a72"/><path d="M722.50,693.44 L744.57,692.60 L758.90,693.44 L758.90,715.34 L744.57,720.10 L726.18,716.10 L722.50,709.44 Z" fill="none" stroke="#4a4a4a" stroke-width="1.3" stroke-linejoin="round"/><line x1="744.57" y1="692.60" x2="744.57" y2="720.10" stroke="#4a4a4a" stroke-width="1.3"/><defs><linearGradient id="sh" x1="0" x2="1"><stop offset="0" stop-color="#000" stop-opacity="0"/><stop offset="1" stop-color="#000" stop-opacity="0.13"/></linearGradient></defs><rect x="878" y="397" width="10" height="635" fill="url(#sh)"/></svg>
<div class="b" style="left:464.2px;top:921.8px;width:30.7px;height:29px;background:#ffffff;border-radius:3px;box-shadow:0 0 1px rgba(0,0,0,0.15);"></div>
<svg class="b" style="left:464px;top:921px;" width="31" height="30" viewBox="464 921 31 30"><g stroke="#555" stroke-width="2" fill="none" stroke-linecap="round"><path d="M473.5,942.5 L477.8,938.2 M481.2,934.8 L485.5,930.5"/></g><path d="M471.5,938 L471.5,944.5 L478,944.5 Z M487.5,935 L487.5,928.5 L481,928.5 Z" fill="#555"/></svg>
<div class="b" style="left:464.2px;top:956.8px;width:30.7px;height:64.3px;background:#ffffff;border-radius:3px;box-shadow:0 0 1px rgba(0,0,0,0.15);"></div>
<div class="b" style="left:464.2px;top:989px;width:30.7px;height:1px;background:#eeeeee;"></div>
<svg class="b" style="left:464px;top:956px;" width="31" height="65" viewBox="464 956 31 65"><path d="M473.5,973 L485.5,973 M479.5,967 L479.5,979 M474,1005 L485,1005" stroke="#555" stroke-width="1.6" fill="none"/></svg>
<div class="b" style="left:888px;top:397px;width:301px;height:635px;background:#ffffff;border-radius:0 4px 4px 0;"></div>
<div class="t" style="left:909.30px;top:406.80px;font-size:22px;color:#555;transform:scale(1.0361,1);transform-origin:0 18.50px;">Asset Summary</div>
<svg class="b" style="left:1160px;top:403px;" width="28" height="25" viewBox="1160 403 28 25"><circle cx="1173.9" cy="415.5" r="7" fill="none" stroke="#333" stroke-width="2"/><path d="M1172.01,413.61 L1175.7900000000002,417.39 M1175.7900000000002,413.61 L1172.01,417.39" stroke="#333" stroke-width="2.9" stroke-linecap="round"/></svg>
<svg class="b" style="left:910px;top:465px;" width="65" height="50" viewBox="910 465 65 50"><path d="M919.00,474.50 L947.50,473.40 L966.00,474.50 L966.00,503.25 L947.50,509.50 L923.75,504.25 L919.00,495.50 Z" fill="#ffffff"/><path d="M947.50,473.40 L966.00,474.50 L966.00,503.25 L947.50,509.50 Z" fill="#ffffff"/><path d="M928.50,488.70 L947.50,489.80" stroke="#0c2a72" stroke-width="6"/><circle cx="928.50" cy="488.70" r="3.0" fill="#0c2a72"/><path d="M919.00,474.50 L947.50,473.40 L966.00,474.50 L966.00,503.25 L947.50,509.50 L923.75,504.25 L919.00,495.50 Z" fill="none" stroke="#333" stroke-width="1.5" stroke-linejoin="round"/><line x1="947.50" y1="473.40" x2="947.50" y2="509.50" stroke="#333" stroke-width="1.5"/></svg>
<div class="t" style="left:977.72px;top:480.15px;font-size:19.3px;font-weight:700;color:#1b3370;transform:scale(0.9810,1);transform-origin:0 16.15px;">RKN 02938</div>
<div class="t" style="left:915.90px;top:532.80px;font-size:16px;font-weight:700;color:#747474;transform:scale(0.9734,1);transform-origin:0 13.50px;">Asset ID</div>
<div class="t" style="left:1036.50px;top:532.80px;font-size:16px;color:#8a8a8a;transform:scale(1.0864,1);transform-origin:0 13.50px;">02938</div>
<div class="t" style="left:915.90px;top:559.80px;font-size:16px;font-weight:700;color:#747474;transform:scale(0.9729,1);transform-origin:0 13.50px;">Category</div>
<div class="t" style="left:1035.44px;top:559.80px;font-size:16px;color:#8a8a8a;transform:scale(1.0562,1);transform-origin:0 13.50px;">RKN</div>
<div class="t" style="left:915.90px;top:584.80px;font-size:16px;font-weight:700;color:#747474;transform:scale(0.9510,1);transform-origin:0 13.50px;">Status</div>
<div class="t" style="left:1035.46px;top:584.80px;font-size:16px;color:#8a8a8a;transform:scale(1.0424,1);transform-origin:0 13.50px;">In-Transit</div>
<div class="t" style="left:914.94px;top:610.80px;font-size:16px;font-weight:700;color:#747474;transform:scale(0.9647,1);transform-origin:0 13.50px;">Last Location</div>
<div class="t" style="left:1035.55px;top:610.80px;font-size:16px;color:#8a8a8a;transform:scale(0.9469,1);transform-origin:0 13.50px;">SFO</div>
<div class="t" style="left:915.90px;top:636.80px;font-size:16px;font-weight:700;color:#747474;transform:scale(0.9547,1);transform-origin:0 13.50px;">Sensor ID</div>
<div class="t" style="left:1036.50px;top:636.80px;font-size:16px;color:#1f3f7b;transform:scale(1.0264,1);transform-origin:0 13.50px;">J1S43829IK</div>
<div class="t" style="left:915.90px;top:662.80px;font-size:16px;font-weight:700;color:#747474;transform:scale(0.9644,1);transform-origin:0 13.50px;">Shipment</div>
<div class="t" style="left:1036.50px;top:662.80px;font-size:16px;color:#1f3f7b;transform:scale(1.0117,1);transform-origin:0 13.50px;">Vaccine Shipment</div>
<div class="t" style="left:914.97px;top:687.80px;font-size:16px;font-weight:700;color:#747474;transform:scale(0.9328,1);transform-origin:0 13.50px;">Lease #</div>
<div class="t" style="left:1035.44px;top:687.80px;font-size:16px;color:#1f3f7b;transform:scale(1.0606,1);transform-origin:0 13.50px;">L1890QP</div>
<div class="b" style="left:889.6px;top:739px;width:299px;height:199px;background:#e5f5f6;border-radius:3px;"></div>
<div class="t" style="left:967.10px;top:752.90px;font-size:14.8px;font-weight:700;color:#5e5e5e;transform:scale(0.9152,1);transform-origin:0 12.40px;">Ambient Temp.</div>
<div class="t" style="left:1080.00px;top:752.90px;font-size:14.8px;color:#777;transform:scale(0.9636,1);transform-origin:0 12.40px;">32°C</div>
<div class="t" style="left:967.10px;top:779.90px;font-size:14.8px;font-weight:700;color:#5e5e5e;transform:scale(0.8921,1);transform-origin:0 12.40px;">Cargo Temp.</div>
<div class="t" style="left:1078.96px;top:779.90px;font-size:14.8px;color:#777;transform:scale(1.0435,1);transform-origin:0 12.40px;">5°C</div>
<div class="t" style="left:967.10px;top:804.90px;font-size:14.8px;font-weight:700;color:#5e5e5e;transform:scale(0.9164,1);transform-origin:0 12.40px;">Cargo Humidity</div>
<div class="t" style="left:1080.00px;top:804.90px;font-size:14.8px;color:#777;transform:scale(0.9067,1);transform-origin:0 12.40px;">26%</div>
<div class="t" style="left:967.10px;top:829.90px;font-size:14.8px;font-weight:700;color:#5e5e5e;transform:scale(0.8444,1);transform-origin:0 12.40px;">Shock</div>
<div class="t" style="left:1078.96px;top:829.90px;font-size:14.8px;color:#777;transform:scale(1.0435,1);transform-origin:0 12.40px;">18g</div>
<div class="t" style="left:967.10px;top:855.90px;font-size:14.8px;font-weight:700;color:#5e5e5e;transform:scale(0.9636,1);transform-origin:0 12.40px;">Tilt</div>
<div class="t" style="left:1078.98px;top:855.90px;font-size:14.8px;color:#777;transform:scale(1.0238,1);transform-origin:0 12.40px;">10°</div>
<div class="t" style="left:966.20px;top:881.90px;font-size:14.8px;font-weight:700;color:#5e5e5e;transform:scale(0.8968,1);transform-origin:0 12.40px;">Pressure</div>
<div class="t" style="left:1079.05px;top:881.90px;font-size:14.8px;color:#777;transform:scale(0.9508,1);transform-origin:0 12.40px;">1001hPa</div>
<div class="t" style="left:966.17px;top:907.90px;font-size:14.8px;font-weight:700;color:#5e5e5e;transform:scale(0.9294,1);transform-origin:0 12.40px;">Door</div>
<div class="t" style="left:1080.00px;top:907.90px;font-size:14.8px;color:#777;transform:scale(0.9429,1);transform-origin:0 12.40px;">closed</div>
<svg class="b" style="left:912px;top:745px;" width="30" height="185" viewBox="912 745 30 185"><g fill="none" stroke="#3b5078" stroke-width="1.3" stroke-linecap="round" stroke-linejoin="round">
<path d="M926,760.4 L926,752 A2.2,2.2 0 0 1 930.4,752 L930.4,760.4 A4.3,4.3 0 1 1 926,760.4 Z"/>
<path d="M926,787.3 L926,779 A2.2,2.2 0 0 1 930.4,779 L930.4,787.3 A4.3,4.3 0 1 1 926,787.3 Z"/>
<line x1="919" y1="796.1" x2="937.6" y2="796.1" stroke-width="1.4"/>
<path d="M925.3,804 Q920,811 920.4,813.5 A4.8,4.8 0 0 0 929.6,814.5"/>
<path d="M930.2,804.3 Q936.5,812 936.1,814.5 A5.7,5.7 0 0 1 924.8,815 Q924.6,811 930.2,804.3 Z"/>
<path d="M925.3,804 Q927.5,807 928.3,808.8"/>
<line x1="919" y1="820.6" x2="937.6" y2="820.6" stroke-width="1.4"/>
<path d="M926.5,829.3 L932.2,829.3 L929.2,834.3 L934.8,832.2 L925.4,845.5 L928.3,837 L924,837.2 Z"/>
<path d="M925.9,862.6 L929.3,859.8 L931.7,863.4 L928.3,866.2 Z"/>
<path d="M925.9,862.6 L921.2,861.2 M929.3,859.8 L931.2,856.6 M931.7,863.4 L935.3,866.9 M928.3,866.2 L925.9,871"/>
<path d="M921.7,895.5 A8.7,8.7 0 1 1 935.1,895.5"/>
<circle cx="928.4" cy="893.3" r="1.9"/>
<line x1="929" y1="891.4" x2="931" y2="885.5"/>
<line x1="920.8" y1="908.9" x2="925.8" y2="908.9"/>
<line x1="926.2" y1="918" x2="921.2" y2="918"/>
<circle cx="932.2" cy="908.5" r="3.2"/><circle cx="932.2" cy="918.5" r="3.2"/>
<path d="M930.6,906.9 L933.8,910.1 M930.6,920.1 L933.8,916.9" stroke-width="1"/>
<line x1="917.7" y1="913.6" x2="938.7" y2="913.6" stroke-width="1.2"/>
</g>
<g fill="#3b5078">
<circle cx="928.2" cy="764.1" r="1.1"/><circle cx="928.2" cy="791" r="1.1"/>
<path d="M923.8,906.9 L926.6,908.9 L923.8,910.9 Z M924,916 L921.2,918 L924,920 Z"/>
<circle cx="921" cy="861" r="1.1"/><circle cx="931.3" cy="856.5" r="1.1"/><circle cx="935.4" cy="867" r="1.1"/><circle cx="925.8" cy="871.2" r="1.1"/>
</g></svg>
<div class="t" style="left:1050.50px;top:1008.05px;font-size:14.5px;font-weight:700;color:#1b3370;transform:scale(0.8690,1);transform-origin:0 12.25px;">ASSET DETAILS</div>
<svg class="b" style="left:1160px;top:1005px;" width="22" height="20" viewBox="1160 1005 22 20"><path d="M1165.5,1014.8 L1175,1014.8 M1170.5,1010 L1175.3,1014.8 L1170.5,1019.6" fill="none" stroke="#1b3370" stroke-width="2.8" stroke-linecap="round" stroke-linejoin="round"/></svg>
<div class="b" style="left:0px;top:1072.5px;width:1200px;height:6.5px;background:#ebebeb;"></div>
</body></html>
